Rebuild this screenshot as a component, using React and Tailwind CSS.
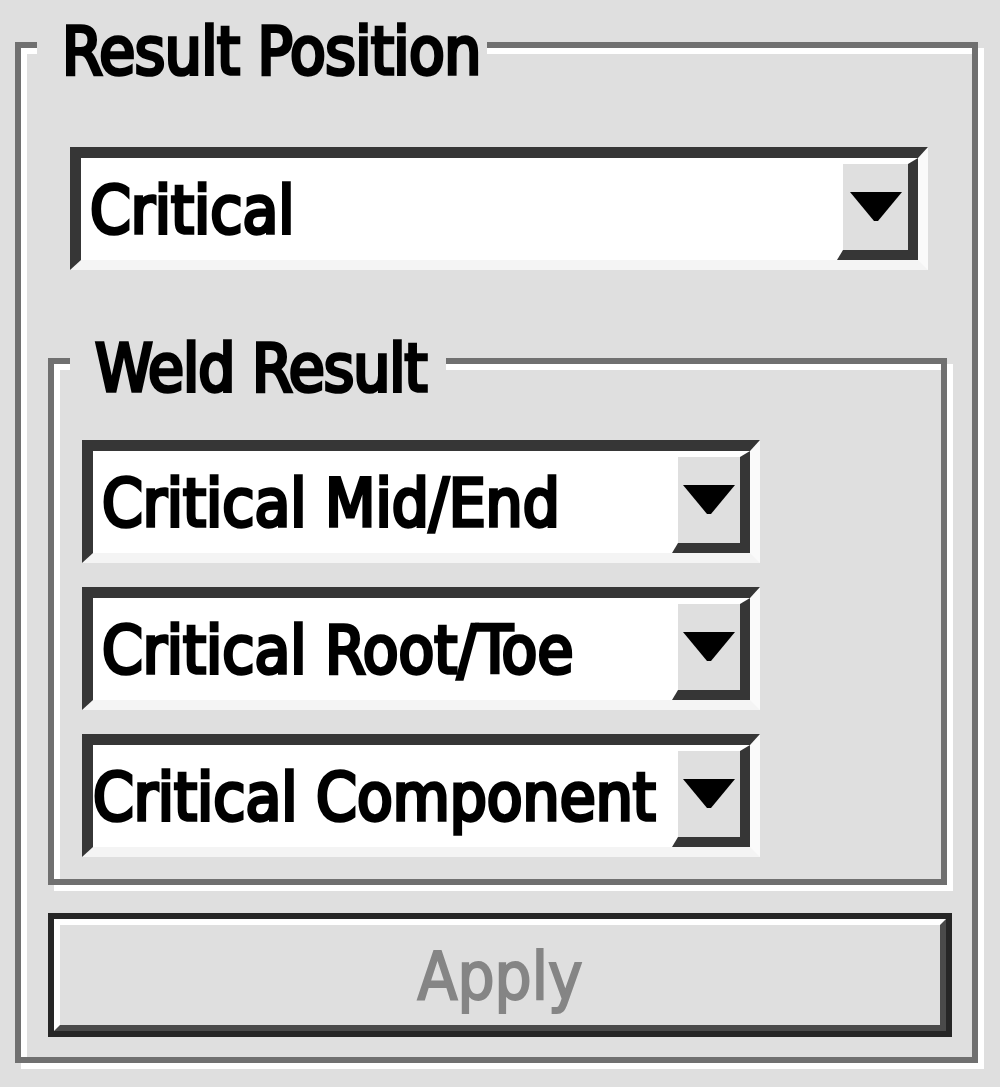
import React from 'react';

const Arrow = () => (
    <svg width="52" height="30" viewBox="0 0 52 30">
        <polygon points="0,0 52,0 28,29 24,29" fill="#000" />
    </svg>
);

const Combo = ({ label, width, btnWidth, pad }) => (
    <div className={`flex h-[123px] bg-white border-t-[11px] border-l-[11px] border-b-[10px] border-r-[10px] border-t-[#363636] border-l-[#363636] border-b-[#f4f4f4] border-r-[#fafafa] ${width}`}>
        <div className={`flex-1 flex items-center pt-[3px] overflow-hidden whitespace-nowrap ${pad}`}>
            <span className="text-[65px] leading-none text-black [-webkit-text-stroke:3.5px_black]">{label}</span>
        </div>
        <div className={`flex items-center justify-center bg-[#dfdfdf] border-t-[6px] border-l-[6px] border-t-white border-l-white border-r-[10px] border-b-[10px] border-r-[#363636] border-b-[#363636] ${btnWidth}`}>
            <Arrow />
        </div>
    </div>
);

const App = () => {
    return (
        <div className="w-[1000px] h-[1087px] bg-[#dfdfdf] pt-[42px] pl-[15px] font-['DejaVu_Sans_Condensed','Liberation_Sans',sans-serif]">
            {/* Result Position group */}
            <div className="relative w-[963px] h-[1021px] border-[6px] border-[#707070] shadow-[6px_6px_0_0_#fff,inset_6px_6px_0_0_#fff] pl-[27px] pt-[99px] flex flex-col">
                <div className="absolute top-[-29px] left-[16px] bg-[#dfdfdf] pl-[25px] pr-[6px]">
                    <span className="text-[65px] leading-none text-black tracking-[-0.5px] [-webkit-text-stroke:3.5px_black]">Result Position</span>
                </div>

                <div className="ml-[22px]">
                    <Combo label="Critical" width="w-[858px]" btnWidth="w-[81px]" pad="pl-[9px]" />
                </div>

                {/* Weld Result group */}
                <div className="relative mt-[88px] w-[899px] h-[527px] border-[6px] border-[#707070] shadow-[6px_6px_0_0_#fff,inset_6px_6px_0_0_#fff] pl-[28px] pt-[76px] flex flex-col gap-[24px]">
                    <div className="absolute top-[-28px] left-[16px] bg-[#dfdfdf] pl-[25px] pr-[20px]">
                        <span className="text-[65px] leading-none text-black tracking-[-1px] [-webkit-text-stroke:3.5px_black]">Weld Result</span>
                    </div>
                    <Combo label="Critical Mid/End" width="w-[678px]" btnWidth="w-[78px]" pad="pl-[9px]" />
                    <Combo label="Critical Root/Toe" width="w-[678px]" btnWidth="w-[78px]" pad="pl-[9px]" />
                    <Combo label="Critical Component" width="w-[678px]" btnWidth="w-[78px]" pad="pl-0" />
                </div>

                <div className="mt-[28px] w-[904px] h-[124px] border-[6px] border-[#262626]">
                    <div className="h-full flex items-center justify-center bg-[#dfdfdf] border-t-[6px] border-l-[6px] border-t-white border-l-white border-b-[6px] border-r-[6px] border-b-[#4a4a4a] border-r-[#4a4a4a]">
                        <span className="text-[65px] leading-none text-[#858585] [-webkit-text-stroke:2px_#858585] pt-[2px]">Apply</span>
                    </div>
                </div>
            </div>
        </div>
    );
};

export default App;
